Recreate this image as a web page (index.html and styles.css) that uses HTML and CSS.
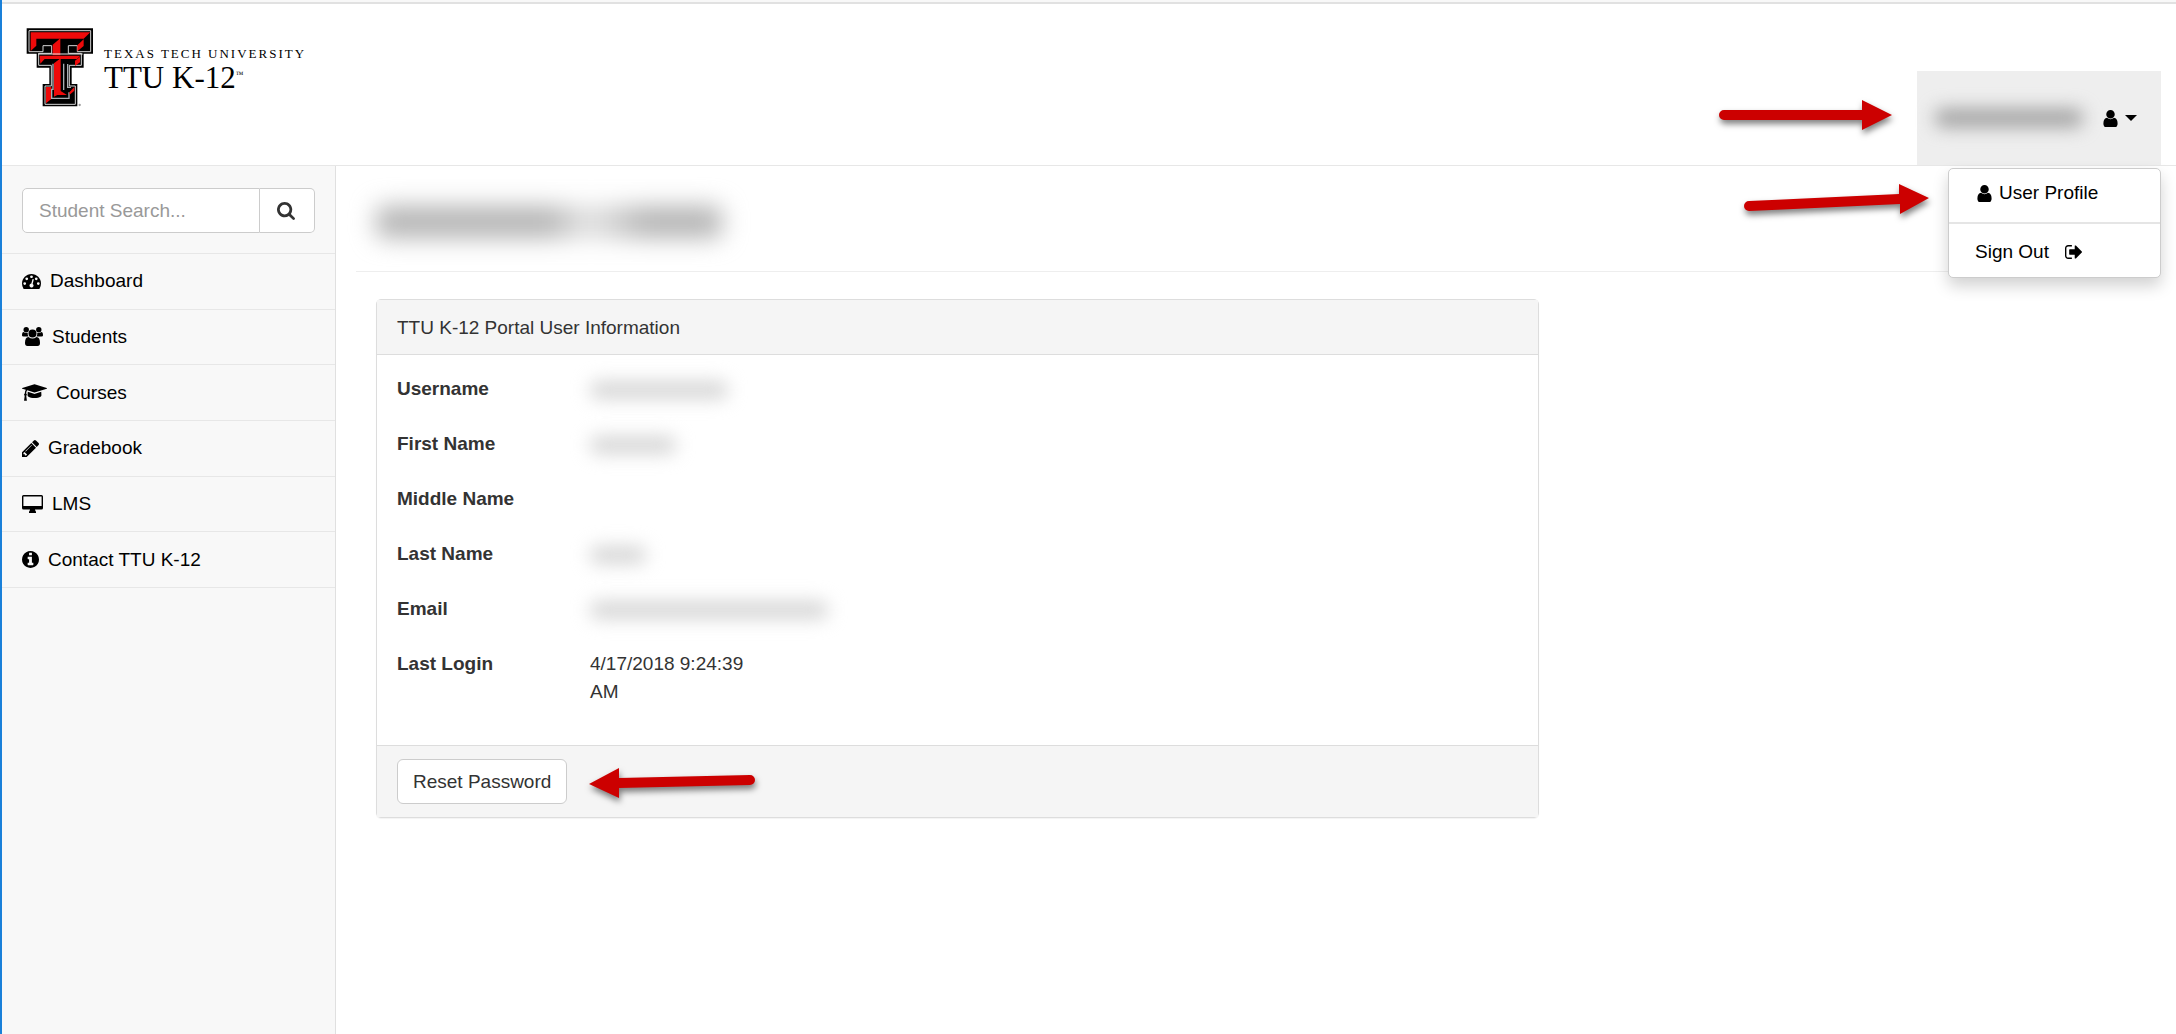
FILE: index.html
```html
<!DOCTYPE html>
<html lang="en">
<head>
<meta charset="utf-8">
<meta name="viewport" content="width=device-width, initial-scale=1">
<title>TTU K-12 Portal</title>
<link rel="stylesheet" href="styles.css">
</head>
<body>
<svg class="sprite" aria-hidden="true">
  <symbol id="user" viewBox="256 128 1280 1536"><path d="M1536 1399q0 109-62.5 187t-150.5 78h-854q-88 0-150.5-78t-62.5-187q0-85 8.5-160.5t31.5-152 58.5-131 94-89 134.5-34.5q131 128 313 128t313-128q76 0 134.5 34.5t94 89 58.5 131 31.5 152 8.5 160.5zm-256-887q0 159-112.5 271.5t-271.5 112.5-271.5-112.5-112.5-271.5 112.5-271.5 271.5-112.5 271.5 112.5 112.5 271.5z"/></symbol>
</svg>
<header class="topbar">
  <a class="brand" href="#" aria-label="Texas Tech University TTU K-12">
    <svg class="brand-mark" viewBox="78 84 202 237" aria-hidden="true">
      <path d="M79 85H278V161H250V203H214V252H231V319H127V252H147V203H109V161H79Z"/>
      <path fill="none" stroke="#d4d4d4" stroke-width="3" d="M86 92H271V155H231V137H204V160H243V196H207V258H225V313H134V258H153V196H115V160H154V137H128V155H86Z"/>
      <path fill="#ee0a0a" d="M91 97H270L250 116H108V137L91 153Z"/>
      <path fill="#ee0a0a" d="M157 134L180 115V166H157ZM231 136L250 118V138L231 154Z"/>
      <path fill="none" stroke="#e8e8e8" stroke-width="3" d="M113 162H247"/>
      <path fill="#ee0a0a" d="M118 167H240L230 177H133L120 191Z"/>
      <path fill="#ee0a0a" d="M224 182L239 170V187L224 198ZM161 190L181 175V280L161 290ZM137 261H153V297L137 310Z"/>
      <path fill="none" stroke="#a9acb1" stroke-width="4" d="M190 191V270M202 192V262H212M158 191V268H154V295H206V277"/>
      <path fill="#ee0a0a" d="M181 273L200 285H163ZM207 277L222 261V272L208 284Z"/>
      <circle cx="238" cy="315" r="3.500" fill="#999"/>
    </svg>
    <span class="brand-text">
      <span class="brand-university">TEXAS TECH UNIVERSITY</span>
      <span class="brand-name">TTU K-12<sup>™</sup></span>
    </span>
  </a>
  <div class="account">
    <button class="account-toggle" type="button" aria-label="Account menu" aria-expanded="true">
      <span class="redacted redacted-account"></span>
      <svg class="icon-user" aria-hidden="true"><use href="#user"/></svg>
      <span class="caret"></span>
    </button>
    <nav class="account-menu" aria-label="Account">
      <a href="#"><svg class="icon-user" aria-hidden="true"><use href="#user"/></svg>User Profile</a>
      <a class="sign-out" href="#">Sign Out<svg width="17" height="14" viewBox="64 256 1568 1280" aria-hidden="true"><path d="M704 1440q0 4 1 20t.5 26.500-3 23.500-10 19.500-20.500 6.500h-320q-119 0-203.500-84.500t-84.500-203.500v-704q0-119 84.500-203.500t203.500-84.500h320q13 0 22.500 9.500t9.500 22.500q0 4 1 20t.5 26.500-3 23.500-10 19.500-20.500 6.500h-320q-66 0-113 47t-47 113v704q0 66 47 113t113 47h312l11.500 1 11.500 3 8 5.500 7 9 2 13.500zm928-544q0 26-19 45l-544 544q-19 19-45 19t-45-19-19-45v-288h-448q-26 0-45-19t-19-45v-384q0-26 19-45t45-19h448v-288q0-26 19-45t45-19 45 19l544 544q19 19 19 45z"/></svg></a>
    </nav>
    <svg class="arrow arrow-account" width="180" height="42" viewBox="0 0 180 42" aria-hidden="true"><path d="M9 11H147V1L177 16L147 31V21H9A5 5 0 0 1 9 11Z"/></svg>
    <svg class="arrow arrow-profile" width="192" height="42" viewBox="0 0 192 42" aria-hidden="true"><path d="M9 18L159 11V1L189 15L160 31V21L9 28A5 5 0 0 1 9 18Z"/></svg>
  </div>
</header>
<div class="shell">
  <aside class="sidebar">
    <form class="search" role="search">
      <input type="text" placeholder="Student Search..." aria-label="Student Search">
      <button type="submit" aria-label="Search"><svg width="18" height="18" viewBox="64 128 1664 1664" aria-hidden="true"><path d="M1216 832q0-185-131.500-316.500t-316.500-131.500-316.500 131.500-131.500 316.500 131.500 316.500 316.500 131.500 316.500-131.500 131.500-316.500zm512 832q0 52-38 90t-90 38q-54 0-90-38l-343-342q-179 124-399 124-143 0-273.500-55.500t-225-150-150-225-55.500-273.500 55.500-273.500 150-225 225-150 273.500-55.500 273.500 55.500 225 150 150 225 55.500 273.500q0 220-124 399l343 343q37 37 37 90z"/></svg></button>
    </form>
    <nav class="side-nav" aria-label="Main">
      <a href="#"><svg width="19" height="15" viewBox="0 256 1792 1408" aria-hidden="true"><path d="M384 1152q0-53-37.500-90.500t-90.500-37.500-90.500 37.500-37.500 90.500 37.500 90.500 90.500 37.500 90.500-37.500 37.500-90.500zm192-448q0-53-37.500-90.500t-90.500-37.500-90.500 37.500-37.500 90.500 37.500 90.500 90.500 37.500 90.500-37.500 37.500-90.500zm428 481l101-382q6-26-7.500-48.500t-38.500-29.500-48 6.500-30 39.500l-101 382q-60 5-107 43.500t-63 98.500q-20 77 20 146t117 89 146-20 89-117q16-60-6-117t-72-91zm660-33q0-53-37.500-90.500t-90.500-37.500-90.500 37.500-37.500 90.500 37.500 90.500 90.500 37.500 90.500-37.500 37.500-90.500zm-640-640q0-53-37.500-90.500t-90.500-37.500-90.500 37.500-37.500 90.500 37.500 90.500 90.500 37.500 90.500-37.500 37.500-90.500zm448 192q0-53-37.500-90.500t-90.500-37.500-90.500 37.500-37.500 90.500 37.500 90.500 90.500 37.500 90.500-37.500 37.500-90.500zm320 448q0 261-141 483-19 29-54 29h-1402q-35 0-54-29-141-221-141-483 0-182 71-348t191-286 286-191 348-71 348 71 286 191 191 286 71 348z"/></svg>Dashboard</a>
      <a href="#"><svg width="21" height="19" viewBox="0 0 21 19" aria-hidden="true"><circle cx="4.200" cy="2.700" r="2.700"/><circle cx="16.800" cy="2.700" r="2.700"/><circle cx="10.500" cy="6.500" r="4"/><path d="M0 8.500Q0 5 1.500 5Q4 6.700 5.700 5.700Q5.500 8 6.500 9.500H1.500Q0 9.500 0 8.500ZM21 8.500Q21 5 19.500 5Q17 6.700 15.300 5.700Q15.500 8 14.500 9.500H19.500Q21 9.500 21 8.500ZM3 16Q3 10 6.500 10Q10.500 13 14.500 10Q18 10 18 16Q18 19 15.500 19H5.500Q3 19 3 16Z"/></svg>Students</a>
      <a href="#"><svg width="25" height="17" viewBox="0 128 2304 1536" aria-hidden="true"><path d="M1774 836l18 316q4 69-82 128t-235 93.500-323 34.500-323-34.500-235-93.500-82-128l18-316 574 181q22 7 48 7t48-7zm530-324q0 23-22 31l-1120 352q-4 1-10 1t-10-1l-652-206q-43 34-71 111.500t-34 178.500q63 36 63 109 0 69-58 107l58 433q2 14-8 25-9 11-24 11h-192q-15 0-24-11-10-11-8-25l58-433q-58-38-58-107 0-73 65-111 11-207 98-330l-333-104q-22-8-22-31t22-31l1120-352q4-1 10-1t10 1l1120 352q22 8 22 31z"/></svg>Courses</a>
      <a href="#"><svg width="17" height="17" viewBox="128 149 1515 1515" aria-hidden="true"><path d="M491 1536l91-91-235-235-91 91v107h128v128h107zm523-928q0-22-22-22-10 0-17 7l-542 542q-7 7-7 17 0 22 22 22 10 0 17-7l542-542q7-7 7-17zm-54-192l416 416-832 832h-416v-416zm683 96q0 53-37 90l-166 166-416-416 166-165q36-38 90-38 53 0 91 38l235 234q37 39 37 91z"/></svg>Gradebook</a>
      <a href="#"><svg width="21" height="18" viewBox="0 0 21 18" aria-hidden="true"><path fill-rule="evenodd" d="M1.500 0H19.500Q21 0 21 1.500V13Q21 14.500 19.500 14.500H13Q13.200 16 14 16.700V18H7V16.700Q7.800 16 8 14.500H1.500Q0 14.500 0 13V1.500Q0 0 1.500 0ZM1.400 1.400V11H19.600V1.400Z"/></svg>LMS</a>
      <a href="#"><svg width="17" height="17" viewBox="128 128 1536 1536" aria-hidden="true"><path d="M1152 1376v-160q0-14-9-23t-23-9h-96v-512q0-14-9-23t-23-9h-320q-14 0-23 9t-9 23v160q0 14 9 23t23 9h96v320h-96q-14 0-23 9t-9 23v160q0 14 9 23t23 9h448q14 0 23-9t9-23zm-128-896v-160q0-14-9-23t-23-9h-192q-14 0-23 9t-9 23v160q0 14 9 23t23 9h192q14 0 23-9t9-23zm640 416q0 209-103 385.500t-279.500 279.500-385.500 103-385.500-103-279.500-279.500-103-385.500 103-385.500 279.500-279.500 385.500-103 385.500 103 279.500 279.500 103 385.500z"/></svg>Contact TTU K-12</a>
    </nav>
  </aside>
  <main class="content">
    <div class="page-header"><span class="redacted redacted-title" role="img" aria-label="Hidden name"></span></div>
    <section class="panel">
      <div class="panel-heading">TTU K-12 Portal User Information</div>
      <dl class="panel-body">
        <dt>Username</dt><dd><span class="redacted redacted-username"></span></dd>
        <dt>First Name</dt><dd><span class="redacted redacted-first"></span></dd>
        <dt>Middle Name</dt><dd></dd>
        <dt>Last Name</dt><dd><span class="redacted redacted-last"></span></dd>
        <dt>Email</dt><dd><span class="redacted redacted-email"></span></dd>
        <dt>Last Login</dt><dd>4/17/2018 9:24:39 AM</dd>
      </dl>
      <div class="panel-footer">
        <button class="btn" type="button">Reset Password</button>
        <svg class="arrow" width="172" height="32" viewBox="0 0 172 32" aria-hidden="true"><path d="M163 9L32 12V2L2 18L32 32V22L163 19A5 5 0 0 0 163 9Z"/></svg>
      </div>
    </section>
  </main>
</div>
</body>
</html>
```
FILE: styles.css
```css
* {
  box-sizing: border-box;
}

body {
  display: flex;
  flex-direction: column;
  min-height: 100vh;
  margin: 0;
  border-left: 2px solid #1a80d9;
  background: #fff;
  color: #333;
  font-family: "Liberation Sans", Arial, sans-serif;
  font-size: 19px;
  line-height: 28px;
}

a {
  color: #000;
  text-decoration: none;
}

button,
input {
  font: inherit;
}

svg {
  flex: none;
  fill: currentColor;
}

.sprite {
  position: absolute;
  width: 0;
  height: 0;
}

/* Header */
.topbar {
  display: flex;
  justify-content: space-between;
  align-items: flex-end;
  height: 166px;
  padding-right: 15px;
  border-top: 2px solid #f8f8f8;
  border-bottom: 1px solid #e7e7e7;
  box-shadow: inset 0 2px #e1e1e1;
}

.brand {
  display: flex;
  align-self: flex-start;
  gap: 10px;
  padding: 26px 0 0 24px;
}

.brand-mark {
  width: 68px;
  height: 79px;
}

.brand-text {
  display: flex;
  flex-direction: column;
  padding-top: 18px;
  font-family: "Liberation Serif", "Times New Roman", serif;
}

.brand-university {
  font-size: 13px;
  line-height: 16px;
  letter-spacing: 2px;
}

.brand-name {
  font-size: 31px;
  line-height: 32px;
}

.brand-name sup {
  font-size: 8px;
  line-height: 8px;
}

.account {
  position: relative;
}

.account-toggle {
  display: flex;
  align-items: center;
  height: 94px;
  padding: 0 24px 0 18px;
  border: 0;
  background: #eee;
  color: #000;
}

.icon-user {
  width: 15px;
  height: 17px;
}

.caret {
  margin-left: 7px;
  border: 6px solid transparent;
  border-top-color: #000;
  border-bottom: 0;
}

.account-menu {
  position: absolute;
  z-index: 2;
  top: 97px;
  right: 0;
  width: 213px;
  border: 1px solid #ccc;
  border-radius: 5px;
  background: #fff;
  box-shadow: 0 8px 16px rgba(0, 0, 0, 0.18);
}

.account-menu a {
  display: flex;
  align-items: center;
  gap: 7px;
  height: 53px;
  padding: 0 28px 5px;
}

.account-menu .sign-out {
  gap: 16px;
  height: 55px;
  padding: 2px 26px 0;
  border-top: 2px solid #e5e5e5;
}

.arrow {
  color: #c00;
  overflow: visible;
  filter: drop-shadow(1px 4px 3px rgba(0, 0, 0, 0.5));
}

.arrow-account,
.arrow-profile {
  position: absolute;
  z-index: 1;
}

.arrow-account {
  top: 28px;
  right: 266px;
}

.arrow-profile {
  top: 112px;
  right: 229px;
}

/* Page frame */
.shell {
  display: flex;
  flex: 1;
}

.sidebar {
  flex: none;
  width: 334px;
  border-right: 1px solid #e0e0e0;
  background: #f8f8f8;
}

.search {
  display: flex;
  padding: 22px 20px 20px;
  border-bottom: 1px solid #e7e7e7;
}

.search input {
  flex: 1;
  min-width: 0;
  height: 45px;
  padding: 0 16px;
  border: 1px solid #ccc;
  border-radius: 5px 0 0 5px;
  background: #fff;
}

.search input::placeholder {
  color: #999;
  opacity: 1;
}

.search button {
  display: grid;
  place-items: center;
  width: 55px;
  padding: 0 3px 0 0;
  border: 1px solid #ccc;
  border-left: 0;
  border-radius: 0 5px 5px 0;
  background: #fff;
  color: #333;
}

.side-nav {
  display: grid;
  grid-auto-rows: 1fr;
  min-height: 334px;
}

.side-nav a {
  display: flex;
  align-items: center;
  gap: 9px;
  padding: 0 20px;
  border-bottom: 1px solid #e7e7e7;
}

.content {
  flex: 1;
  min-width: 0;
  padding: 20px 15px 40px 20px;
}

.page-header {
  height: 86px;
  padding: 14px 20px;
  border-bottom: 1px solid #eee;
}

/* Panel */
.panel {
  width: calc(66.667% - 40px);
  margin: 27px 20px 0;
  border: 1px solid #ddd;
  border-radius: 5px;
  box-shadow: 0 1px 1px rgba(0, 0, 0, 0.05);
}

.panel-heading {
  padding: 14px 20px 12px;
  border-bottom: 1px solid #ddd;
  background: #f5f5f5;
}

.panel-body {
  display: grid;
  grid-template-columns: 173px 160px;
  gap: 27px 20px;
  margin: 0;
  padding: 20px 20px 39px;
}

.panel-body dt {
  font-weight: bold;
}

.panel-body dd {
  min-width: 0;
  margin: 0;
}

.panel-footer {
  display: flex;
  align-items: center;
  gap: 20px;
  height: 72px;
  padding: 0 20px;
  border-top: 1px solid #ddd;
  background: #f5f5f5;
}

.btn {
  height: 45px;
  padding: 0 15px;
  border: 1px solid #ccc;
  border-radius: 6px;
  background: #fff;
  color: #333;
}

/* Hidden personal details */
.redacted {
  display: block;
  height: 18px;
  margin-top: 6px;
  border-radius: 8px;
  background: #d6d6d6;
  filter: blur(9px);
}

.redacted-title {
  width: 346px;
  height: 32px;
  background: linear-gradient(90deg, #b4b4b4 50%, #e0e0e0 60%, #d8d8d8 66%, #b4b4b4 78%);
  filter: blur(12px);
}

.redacted-account {
  width: 148px;
  margin: 0 20px 0 0;
  background: #a0a0a0;
}

.redacted-username {
  width: 138px;
}

.redacted-first {
  width: 86px;
}

.redacted-last {
  width: 56px;
}

.redacted-email {
  width: 238px;
}
```
